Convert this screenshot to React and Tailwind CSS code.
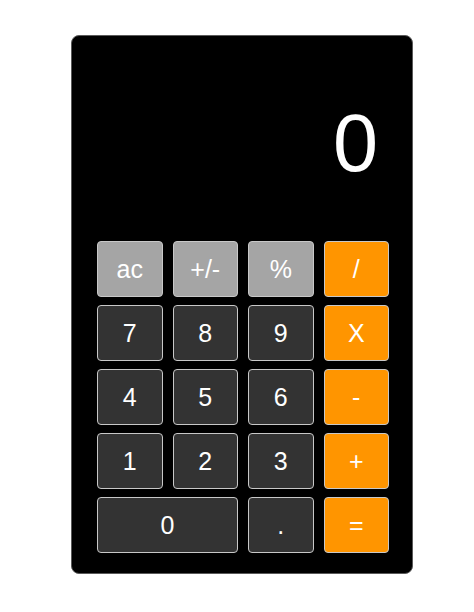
import { useState } from "react";

const keys = [
  { label: "ac", kind: "fn" },
  { label: "+/-", kind: "fn" },
  { label: "%", kind: "fn" },
  { label: "/", kind: "op" },
  { label: "7" },
  { label: "8" },
  { label: "9" },
  { label: "X", kind: "op" },
  { label: "4" },
  { label: "5" },
  { label: "6" },
  { label: "-", kind: "op" },
  { label: "1" },
  { label: "2" },
  { label: "3" },
  { label: "+", kind: "op" },
  { label: "0", wide: true },
  { label: "." },
  { label: "=", kind: "op" },
];

function Key({ k, onPress }) {
  const color =
    k.kind === "fn"
      ? "bg-[#a5a5a5]"
      : k.kind === "op"
      ? "bg-[#ff9500]"
      : "bg-[#333333]";
  return (
    <button
      onClick={() => onPress(k.label)}
      className={`${color} ${
        k.wide ? "col-span-2" : ""
      } border border-[#c8c8c8] rounded-[4px] text-white text-[25px] leading-none flex items-center justify-center`}
    >
      {k.label}
    </button>
  );
}

export default function App() {
  const [value, setValue] = useState("0");

  const press = (label) => {
    if (label === "ac") setValue("0");
  };

  return (
    <div
      className="min-h-[612px] bg-white pt-[35px] pl-[71px]"
      style={{ fontFamily: '"Liberation Sans", Arial, sans-serif' }}
    >
      <div className="w-[342px] h-[539px] bg-black border border-[#5a5a5a] rounded-lg flex flex-col">
        {/* display */}
        <div className="flex-1 flex items-end justify-end pr-[34px] pb-[57px]">
          <span className="text-white text-[81px] leading-none font-light">
            {value}
          </span>
        </div>

        {/* keypad */}
        <div className="grid grid-cols-[repeat(4,65.5px)] auto-rows-[56px] gap-x-[10px] gap-y-[8px] pl-[25px] pb-[20px]">
          {keys.map((k) => (
            <Key key={k.label} k={k} onPress={press} />
          ))}
        </div>
      </div>
    </div>
  );
}
